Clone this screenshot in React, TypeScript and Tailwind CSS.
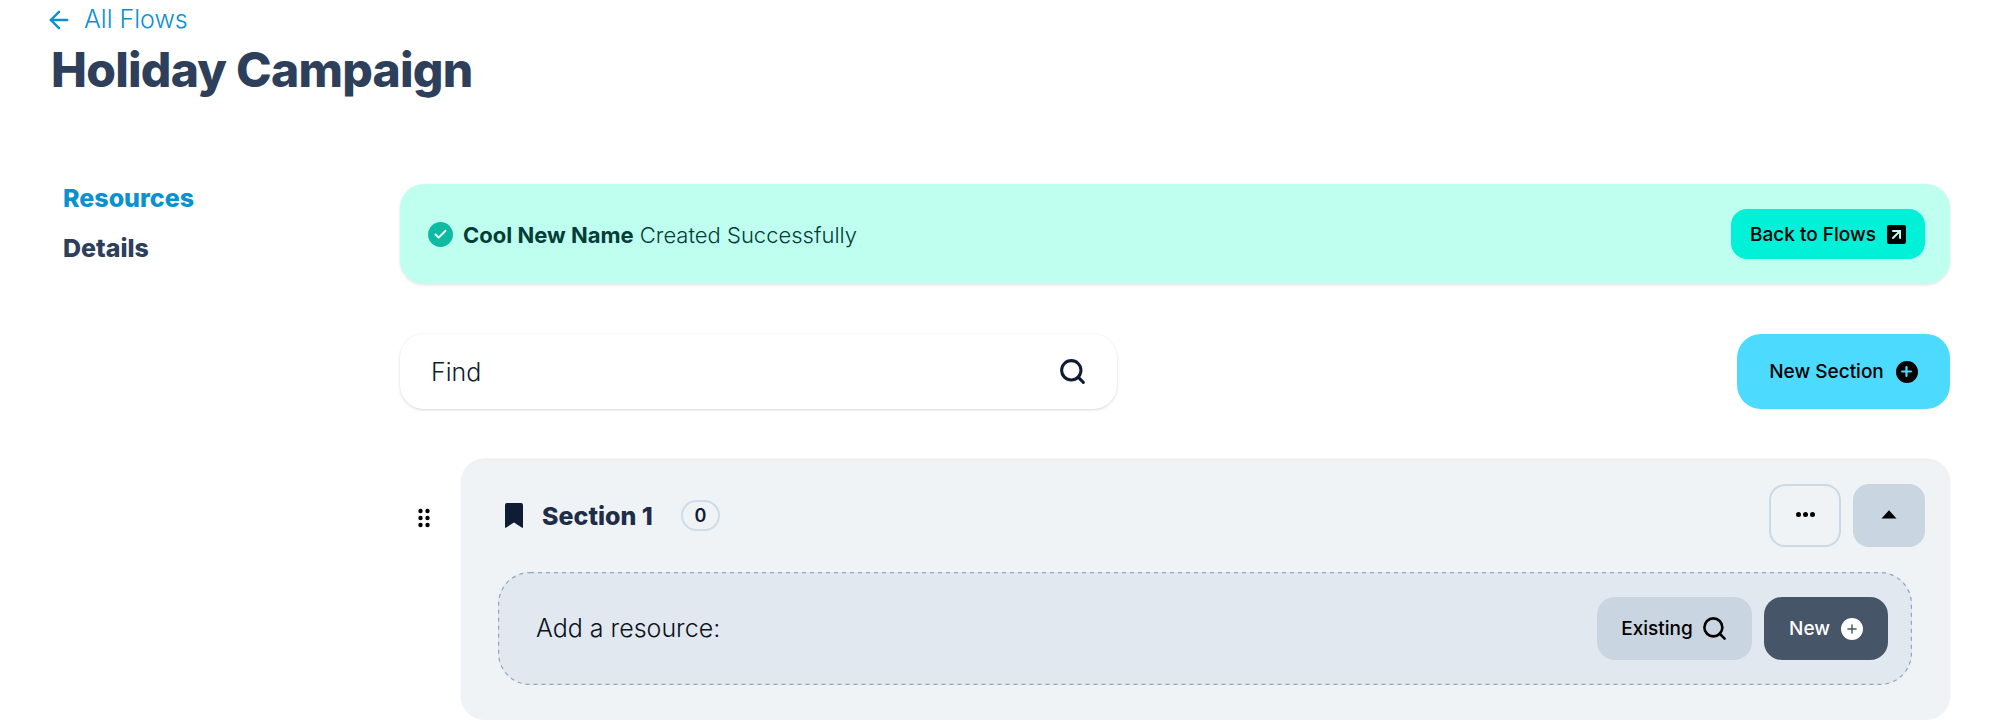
import React from "react";
import { ArrowLeft, Search, ArrowUpRight, Plus, Check } from "lucide-react";

function DragDots() {
  return (
    <svg width="12" height="20" viewBox="0 0 12 20" fill="#000">
      {[3, 10, 17].map((y) => (
        <React.Fragment key={y}>
          <circle cx="2.5" cy={y} r="2.2" />
          <circle cx="9.5" cy={y} r="2.2" />
        </React.Fragment>
      ))}
    </svg>
  );
}

export default function App() {
  return (
    <div className="w-[2000px] h-[722px] overflow-hidden bg-white font-['Inter',sans-serif] pl-[50px] pr-[50px]">
      <a className="flex items-center h-[24px] pt-[8px] text-[25px] font-[350] text-[#0a91d0] leading-[24px] box-content">
        <ArrowLeft className="ml-[-5px] mr-[11px]" size={28} strokeWidth={2.1} color="#0a91d0" />
        <span className="pb-[2px]">All Flows</span>
      </a>
      <h1 className="mt-[9px] ml-[1px] text-[48px] leading-[58px] font-extrabold tracking-[-0.75px] text-[#2d3f5a]">Holiday Campaign</h1>
      <div className="flex mt-[85px]">
        <nav className="w-[350px] shrink-0 pl-[13px] flex flex-col gap-[21px] text-[25px] leading-[29px] font-extrabold">
          <a className="text-[#0a91d0]">Resources</a>
          <a className="text-[#2d3f5a]">Details</a>
        </nav>
        <main className="flex-1 min-w-0">
          <div className="h-[100px] rounded-[24px] bg-[#bffff0] shadow-[0_1px_3px_rgba(0,0,0,0.12)] pl-[28px] pr-[25px] flex items-center justify-between">
            <div className="flex items-center text-[#023d36] text-[22px]">
              <span className="w-[25px] h-[25px] rounded-full bg-[#0dbba3] flex items-center justify-center mr-[10px]">
                <Check size={15} strokeWidth={3} color="#fff" />
              </span>
              <span className="pt-[2px]"><b className="font-bold">Cool New Name</b> <span className="font-[350]">Created Successfully</span></span>
            </div>
            <button className="h-[50px] w-[194px] rounded-[16px] bg-[#00f0d8] flex items-center justify-center gap-[11px] text-[19px] font-medium text-black">
              <span className="pt-[2px]">Back to Flows</span>
              <span className="w-[19px] h-[19px] bg-black rounded-[2px] flex items-center justify-center">
                <ArrowUpRight size={17} strokeWidth={2.75} color="#bffff0" />
              </span>
            </button>
          </div>
          <div className="mt-[50px] flex justify-between">
            <div className="w-[717px] h-[75px] rounded-[24px] bg-white shadow-[0_1px_3px_rgba(0,0,0,0.16)] pl-[31px] pr-[30px] flex items-center justify-between">
              <span className="text-[25px] font-[350] text-[#0f1c33] pt-[3px]">Find</span>
              <Search size={29} strokeWidth={2.5} color="#0f1c33" />
            </div>
            <button className="w-[213px] h-[75px] rounded-[24px] bg-[#4cdbff] flex items-center justify-center gap-[12px] text-[19px] font-medium text-black">
              <span className="pt-[2px]">New Section</span>
              <span className="w-[22px] h-[22px] rounded-full bg-black flex items-center justify-center">
                <Plus size={15} strokeWidth={3.5} color="#4cdbff" />
              </span>
            </button>
          </div>
          <div className="mt-[51px] flex items-start">
            <div className="w-[61px] shrink-0 pt-[48px] pl-[18px]">
              <DragDots />
            </div>
            <section className="flex-1 h-[260px] rounded-[24px] bg-[#eff3f6] shadow-[0_-1px_2px_rgba(0,0,0,0.1)] pl-[37px] pr-[25px] pt-[24px]">
              <div className="flex items-center h-[63px]">
                <svg width="18" height="25" viewBox="0 0 18 25" className="ml-[7px]">
                  <path d="M2 0H16A2 2 0 0 1 18 2V24.2A.6.6 0 0 1 17.1 24.7L9 19.5.9 24.7A.6.6 0 0 1 0 24.2V2A2 2 0 0 1 2 0Z" fill="#0f1c33" />
                </svg>
                <h2 className="text-[25px] font-extrabold text-[#1f2d47] ml-[19px] pt-[3px]">Section 1</h2>
                <span className="ml-[28px] w-[39px] h-[31px] rounded-full border-2 border-[#cfdbe9] flex items-center justify-center text-[18px] font-semibold text-[#0f1c33]">0</span>
                <div className="ml-auto flex gap-[12px]">
                  <button className="w-[72px] h-[63px] rounded-[16px] border-2 border-[#cbd8e6] flex items-center justify-center gap-[2px] pb-[2px]">
                    <i className="w-[5px] h-[5px] rounded-full bg-black" />
                    <i className="w-[5px] h-[5px] rounded-full bg-black" />
                    <i className="w-[5px] h-[5px] rounded-full bg-black" />
                  </button>
                  <button className="w-[72px] h-[63px] rounded-[16px] bg-[#cad5e2] flex items-center justify-center pb-[3px]">
                    <svg width="16" height="9" viewBox="0 0 16 9"><path d="M8 0.3 15.5 8.5 0.5 8.5Z" fill="#000" /></svg>
                  </button>
                </div>
              </div>
              <div className="relative mt-[25px] mr-[13px] h-[113px] rounded-[32px] bg-[#e2e8f0] pl-[38px] pr-[24px] flex items-center justify-between">
                <svg className="absolute left-0 top-0 pointer-events-none" width="1414" height="113" viewBox="0 0 1414 113" fill="none">
                  <rect x="0.6" y="0.6" width="1412.8" height="111.8" rx="31.4" stroke="#94a3be" strokeWidth="1.2" strokeDasharray="4 4" />
                </svg>
                <span className="text-[25px] font-[350] text-[#0b1220]">Add a resource:</span>
                <div className="flex gap-[12px]">
                  <button className="w-[155px] h-[63px] rounded-[18px] bg-[#cad5e2] flex items-center justify-center gap-[8px] text-[19px] font-medium text-black">
                    <span className="pt-[1px]">Existing</span>
                    <Search size={27} strokeWidth={2.3} color="#000" />
                  </button>
                  <button className="w-[124px] h-[63px] rounded-[18px] bg-[#475569] flex items-center justify-center gap-[11px] text-[19px] font-medium text-white">
                    <span className="pt-[1px]">New</span>
                    <span className="w-[22px] h-[22px] rounded-full bg-white flex items-center justify-center">
                      <Plus size={14} strokeWidth={2.5} color="#475569" />
                    </span>
                  </button>
                </div>
              </div>
            </section>
          </div>
        </main>
      </div>
    </div>
  );
}
